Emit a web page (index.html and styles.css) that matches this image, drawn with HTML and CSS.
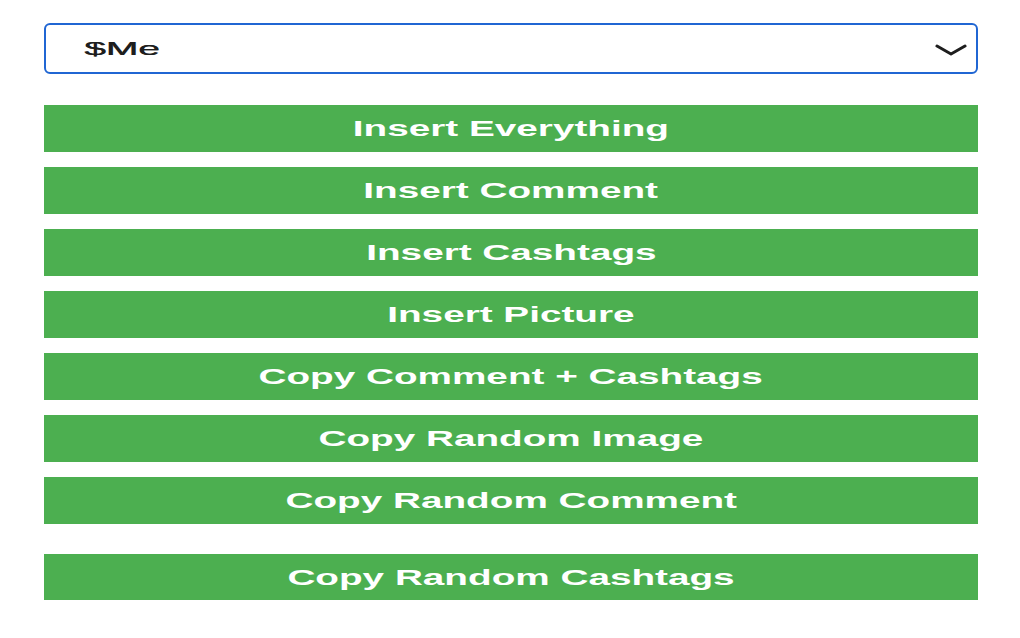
FILE: index.html
```html
<!DOCTYPE html>
<html>
<head>
<meta charset="utf-8">
<link rel="stylesheet" href="styles.css">
</head>
<body>
<div class="popup">
  <div class="select">
    <span class="select-text">$Me</span>
    <svg class="chevron" width="32" height="12" viewBox="0 0 32 12"><polyline points="2,2 16,10 30,2" fill="none" stroke="#1e1e1e" stroke-width="3" stroke-linecap="round" stroke-linejoin="round"/></svg>
  </div>
  <div class="buttons">
    <div class="btn"><span class="label">Insert Everything</span></div>
    <div class="btn"><span class="label">Insert Comment</span></div>
    <div class="btn"><span class="label">Insert Cashtags</span></div>
    <div class="btn"><span class="label">Insert Picture</span></div>
    <div class="btn"><span class="label">Copy Comment + Cashtags</span></div>
    <div class="btn"><span class="label">Copy Random Image</span></div>
    <div class="btn"><span class="label">Copy Random Comment</span></div>
    <div class="btn btn-last"><span class="label">Copy Random Cashtags</span></div>
  </div>
</div>
</body>
</html>
```
FILE: styles.css
```css
html, body {
  margin: 0;
  padding: 0;
  background: #ffffff;
}
body {
  font-family: "Liberation Sans", Arial, sans-serif;
}
.popup {
  width: 934px;
  padding: 23px 0 0 44px;
}
.select {
  box-sizing: border-box;
  height: 51px;
  border: 2px solid #2066d3;
  border-radius: 6px;
  display: flex;
  align-items: center;
  justify-content: space-between;
  padding: 0 9px 0 38px;
}
.select-text {
  display: inline-block;
  font-size: 18.5px;
  color: #1e1e1e;
  text-shadow: 0.4px 0 0 #1e1e1e;
  transform: scaleX(2.1);
  transform-origin: left center;
  margin-top: 1px;
}
.chevron {
  display: block;
  margin-top: 2px;
}
.buttons {
  display: flex;
  flex-direction: column;
  gap: 15.5px;
  margin-top: 31px;
}
.btn {
  height: 46.5px;
  background: #4caf50;
  display: flex;
  align-items: center;
  justify-content: center;
}
.btn-last {
  margin-top: 14.5px;
}
.label {
  display: inline-block;
  color: #ffffff;
  font-weight: bold;
  font-size: 22.5px;
  transform: scaleX(1.72);
  white-space: nowrap;
  margin-top: 2px;
}
```
